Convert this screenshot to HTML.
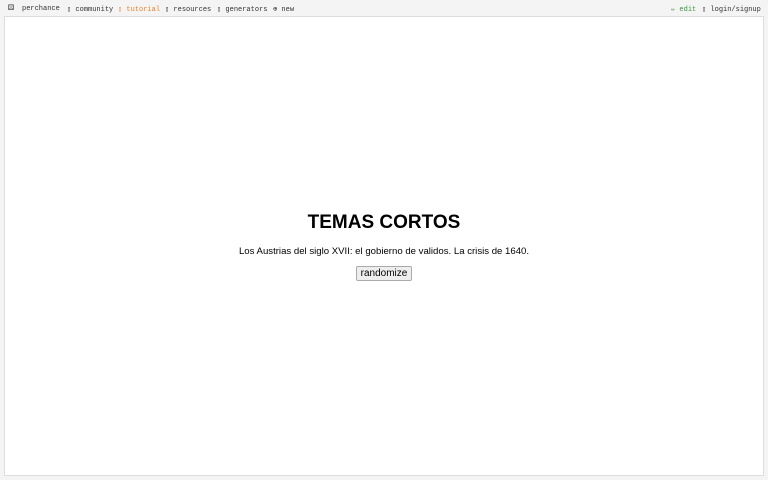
<!DOCTYPE html>
<html><head><meta charset="utf-8"><style>
html,body{margin:0;padding:0;width:768px;height:480px;background:#f4f4f4;overflow:hidden}
.nav{position:absolute;top:0;left:0;right:0;height:16px;font:7px "Liberation Mono",monospace;color:#333}
.nav span{position:absolute;top:5px;white-space:nowrap}
.frame{position:absolute;left:4px;top:16px;width:758px;height:458px;background:#fff;border:1px solid #ddd}
h1{position:absolute;top:212px;left:0;width:768px;text-align:center;margin:0;font:bold 19px "Liberation Sans",sans-serif;color:#000}
.t{position:absolute;top:246px;left:0;width:768px;text-align:center;font:9.6px "Liberation Sans",sans-serif;color:#000}
button{position:absolute;left:356px;top:266px;width:56px;height:15px;font:10px "Liberation Sans",sans-serif;padding:0;border:1px solid #aaa;background:#eee;border-radius:2px;color:#000}
</style></head><body>
<div class="nav">
<span style="left:8px;top:2px;font-size:10px">⚄</span>
<span style="left:22px">perchance</span>
<span style="left:67px">▯ community</span>
<span style="left:118px;color:#e8832a">▯ tutorial</span>
<span style="left:165px">▯ resources</span>
<span style="left:217px">▯ generators</span>
<span style="left:273px">⊕ new</span>
<span style="left:671px;color:#3a9a3a">✏ edit</span>
<span style="left:702px">▯ login/signup</span>
</div>
<div class="frame"></div>
<h1>TEMAS CORTOS</h1>
<div class="t">Los Austrias del siglo XVII: el gobierno de validos. La crisis de 1640.</div>
<button>randomize</button>
</body></html>
